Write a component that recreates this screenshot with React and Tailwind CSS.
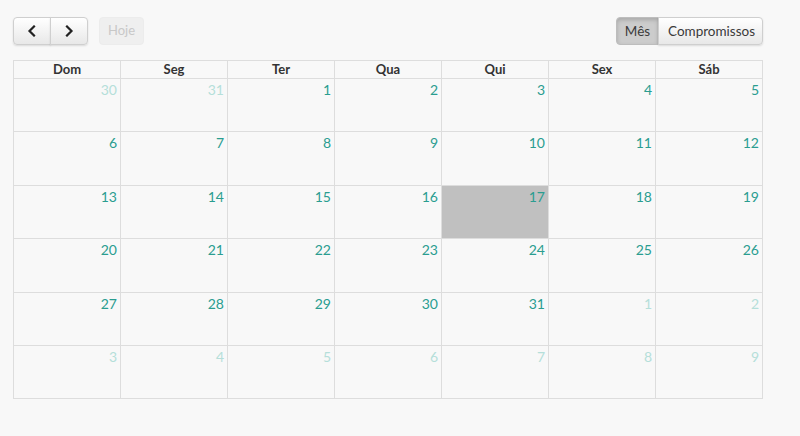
import React from 'react';

const DAYS = ['Dom', 'Seg', 'Ter', 'Qua', 'Qui', 'Sex', 'Sáb'];

// 6 weeks, starting on the 30th of the previous month
const WEEKS = [
  [30, 31, 1, 2, 3, 4, 5],
  [6, 7, 8, 9, 10, 11, 12],
  [13, 14, 15, 16, 17, 18, 19],
  [20, 21, 22, 23, 24, 25, 26],
  [27, 28, 29, 30, 31, 1, 2],
  [3, 4, 5, 6, 7, 8, 9],
];

const btn =
  'h-[28px] px-[9px] text-[13.5px] text-[#3a3a3a] border border-[#cfcfcf] bg-gradient-to-b from-white to-[#e8e8e8] shadow-[0_1px_2px_rgba(0,0,0,0.12)]';

function Chevron({ dir }) {
  return (
    <svg width="10" height="12" viewBox="0 0 10 12" fill="none">
      <path
        d={dir === 'left' ? 'M7 1.5 L2.5 6 L7 10.5' : 'M3 1.5 L7.5 6 L3 10.5'}
        stroke="#222"
        strokeWidth="2.2"
        strokeLinecap="square"
      />
    </svg>
  );
}

export default function App() {
  return (
    <div
      className="w-[800px] h-[436px] bg-[#f8f8f8] pt-[17px] pl-[13px]"
      style={{ fontFamily: 'Lato, "Open Sans", sans-serif' }}
    >
      <div className="w-[750px] flex items-center justify-between">
        <div className="flex items-center">
          <div className="flex">
            <button className={`${btn} w-[38px] rounded-l-[4px] flex items-center justify-center`}>
              <Chevron dir="left" />
            </button>
            <button className={`${btn} w-[38px] -ml-px rounded-r-[4px] flex items-center justify-center`}>
              <Chevron dir="right" />
            </button>
          </div>
          <button className="ml-[11px] h-[28px] w-[45px] rounded-[4px] bg-[#efefef] border border-[#ececec] text-[13px] text-[#c8c8c8]">
            Hoje
          </button>
        </div>
        <div className="flex">
          <button className="h-[28px] w-[43px] rounded-l-[4px] border border-[#bdbdbd] bg-[#cccccc] text-[13.5px] text-[#3a3a3a] shadow-[inset_0_2px_4px_rgba(0,0,0,0.18)]">
            Mês
          </button>
          <button className={`${btn} -ml-px rounded-r-[4px] w-[105px]`}>Compromissos</button>
        </div>
      </div>

      <div className="mt-[15px] w-[750px] border-l border-t border-[#dddddd]">
        <div className="grid grid-cols-7">
          {DAYS.map((d) => (
            <div
              key={d}
              className="h-[18px] border-r border-b border-[#dddddd] text-center text-[13px] font-bold leading-[17px] text-[#333]"
            >
              {d}
            </div>
          ))}
        </div>
        {WEEKS.map((week, w) => (
          <div key={w} className="grid grid-cols-7">
            {week.map((n, i) => {
              const other = (w === 0 && n > 20) || (w >= 4 && n < 15);
              const today = w === 2 && n === 17;
              return (
                <div
                  key={i}
                  className={`h-[53.4px] border-r border-b border-[#dddddd] pt-[3px] pr-[3px] text-right text-[14px] leading-[16px] ${
                    today ? 'bg-[#c0c0c0]' : ''
                  } ${other ? 'text-[#b5dfda]' : 'text-[#2a9d90]'}`}
                >
                  {n}
                </div>
              );
            })}
          </div>
        ))}
      </div>
    </div>
  );
}
